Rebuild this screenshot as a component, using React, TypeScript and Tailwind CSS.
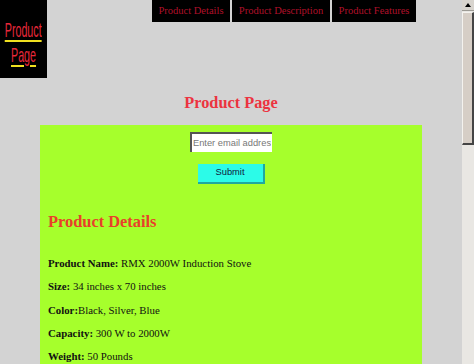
export default function App() {
  const specs = [
    { label: 'Product Name:', value: ' RMX 2000W Induction Stove' },
    { label: 'Size:', value: ' 34 inches x 70 inches' },
    { label: 'Color:', value: 'Black, Silver, Blue' },
    { label: 'Capacity:', value: ' 300 W to 2000W' },
    { label: 'Weight:', value: ' 50 Pounds' },
  ];

  return (
    <div className="flex h-[364px] w-[474px] overflow-hidden bg-[#d3d3d3]">
      <div className="flex-1 overflow-hidden">
        {/* top bar */}
        <div className="flex items-start">
          <div className="flex h-[78px] w-[47px] flex-col items-center bg-black pt-[17px] font-['Liberation_Sans',sans-serif] text-[21px] leading-[25px] text-[#e8283a]">
            <span className="inline-block scale-x-[0.51] whitespace-nowrap underline decoration-[#f0e020] decoration-2 underline-offset-[3px]">Product</span>
            <span className="inline-block scale-x-[0.51] whitespace-nowrap underline decoration-[#f0e020] decoration-2 underline-offset-[3px]">Page</span>
          </div>
          <nav className="ml-[105px] flex gap-[2px] font-['Liberation_Serif',serif] text-[10.5px] text-[#b0102a]">
            <a className="flex h-[22px] w-[78px] items-center justify-center bg-black">Product Details</a>
            <a className="flex h-[22px] w-[98px] items-center justify-center bg-black">Product Description</a>
            <a className="flex h-[22px] w-[84px] items-center justify-center bg-black">Product Features</a>
          </nav>
        </div>

        <h1 className="mt-[15px] text-center font-['Liberation_Serif',serif] text-[16.3px] font-bold leading-[20px] text-[#ec3340]">
          Product Page
        </h1>

        <div className="mx-[40px] mt-[12px] bg-[#a6ff2c] px-[8px] pt-[7px] pb-4 font-['Liberation_Serif',serif] text-[10.8px] text-[#111]">
          <div className="flex flex-col items-center">
            <input
              type="text"
              placeholder="Enter email addres"
              className="h-[20px] w-[82px] border-t-2 border-l-2 border-[#555] bg-white px-[1px] font-['Liberation_Sans',sans-serif] text-[9.3px] text-[#666] placeholder:text-[#777]"
            />
            <button className="mt-[12px] h-[20px] w-[67px] border-r-2 border-b-2 border-[#20a8a0] bg-[#2cfbe8] font-['Liberation_Sans',sans-serif] text-[9.3px] text-[#102040]">
              Submit
            </button>
          </div>

          <h2 className="mt-[28px] text-[16.4px] font-bold leading-[20px] text-[#e8402a]">Product Details</h2>

          <div className="mt-[25px] flex flex-col gap-[10px]">
            {specs.map((s) => (
              <p key={s.label} className="leading-[13.3px]">
                <b>{s.label}</b>
                {s.value}
              </p>
            ))}
          </div>
        </div>
      </div>

      {/* scrollbar */}
      <div className="flex w-[12px] flex-col bg-[#e9e7e3]">
        <div className="flex h-[11px] items-center justify-center border-b border-[#9c9a94] bg-[#d8d4ce]">
          <svg width="6" height="4" viewBox="0 0 6 4">
            <path d="M3 0 L6 4 L0 4 Z" fill="#000" />
          </svg>
        </div>
        <div className="mt-[1px] h-[133px] border-t border-l border-[#f4f2ee] border-r-2 border-b-2 border-r-[#444] border-b-[#444] bg-[#d6cec6]" />
      </div>
    </div>
  );
}
